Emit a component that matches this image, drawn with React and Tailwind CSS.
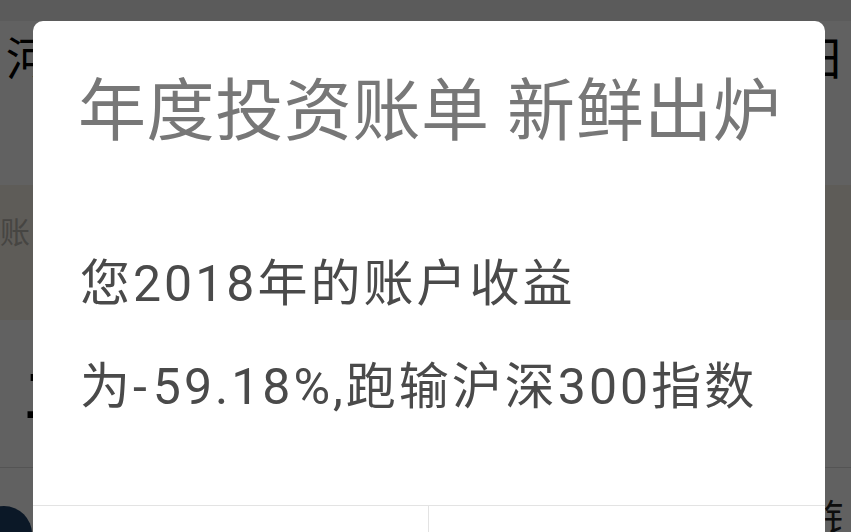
import React from 'react'

const font = { fontFamily: 'Roboto, "Noto Sans CJK SC", sans-serif' }

function Backdrop() {
  // the page underneath the dialog, dimmed by the overlay
  return (
    <div className="flex h-full flex-col bg-white">
      <div className="h-[21px] bg-[#f0f0f0]" />
      <div className="flex h-[164px] items-start justify-between px-[6px] pt-[10px] text-[46px] leading-[56px] text-black">
        <span>河</span>
        <span>日</span>
      </div>
      <div className="flex h-[135px] items-start bg-[#f6f1e8] pt-[28px] text-[30px] leading-[40px] text-[#b9b5ae]">
        <span>账</span>
      </div>
      <div className="flex h-[148px] items-center border-b border-[#dcdcdc] pl-[24px] text-[56px] font-bold text-black">
        <span className="mt-[6px]">三</span>
      </div>
      <div className="flex flex-1 items-end justify-between">
        <div className="-mb-[30px] -ml-[24px] h-[56px] w-[56px] rounded-full bg-[#1d3f66]" />
        <span className="-mb-[14px] mr-[-8px] text-[36px] text-[#222]">钅</span>
      </div>
    </div>
  )
}

export default function App() {
  return (
    <div className="relative h-[532px] w-[851px] overflow-hidden" style={font}>
      <Backdrop />
      <div className="absolute inset-0 bg-black/[0.62]" />
      <div className="absolute left-[33px] top-[21px] h-[600px] w-[792px] rounded-[10px] bg-white">
        <div className="pl-[45px] pt-[46px] text-[68px] leading-[90px] tracking-[0.6px] text-[#777777]">年度投资账单 新鲜出炉</div>
        <div className="pl-[47px] pt-[76px] text-[50px] leading-[103px] tracking-[3px] text-[#4a4a4a]">
          <div>您2018年的账户收益</div>
          <div>为<span className="tracking-[6px]">-</span>59.18%,跑输沪深300指数</div>
        </div>
        <div className="mt-[66px] grid grid-cols-2 border-t border-[#e3e3e3]">
          <div className="h-[60px] border-r border-[#e3e3e3]" />
          <div className="h-[60px]" />
        </div>
      </div>
    </div>
  )
}
